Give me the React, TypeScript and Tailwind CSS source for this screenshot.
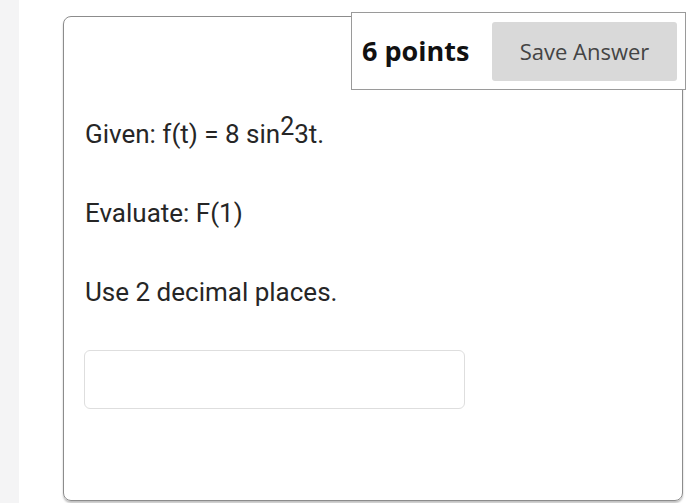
import type { FC } from "react";

const PointsBar: FC = () => (
  <div className="absolute top-[-5px] right-[-4px] flex h-[78px] w-[335px] items-center justify-between border border-[#9a9a9a] bg-white pl-[10px] pr-[8px]">
    <span className="font-['Open_Sans',sans-serif] text-[27px] font-bold text-[#111]">
      6 points
    </span>
    <button className="h-[59px] w-[185px] rounded-[3px] bg-[#d9d9d9] font-['Open_Sans',sans-serif] text-[22px] text-[#444]">
      Save Answer
    </button>
  </div>
);

export default function App() {
  return (
    <div className="flex h-[503px] w-[700px] overflow-hidden bg-white">
      <div className="h-full w-[19px] bg-[#f4f4f5]" />
      <div className="relative ml-[44px] mt-[16px] h-[485px] w-[620px] rounded-lg border border-[#8c8c8c] shadow-[0_2px_2px_rgba(0,0,0,0.25)]">
        <PointsBar />
        <div className="flex flex-col gap-[49px] pl-[21px] pt-[102px] font-['Roboto',sans-serif] text-[26px] leading-[30px] text-[#262626]">
          <p>
            Given: f(t) = 8 sin
            <sup className="relative top-[-8px] align-baseline text-[25px] leading-none">2</sup>
            3t.
          </p>
          <p>Evaluate: F(1)</p>
          <p>Use 2 decimal places.</p>
        </div>
        <input
          type="text"
          className="ml-[20px] mt-[43px] h-[59px] w-[381px] rounded-md border border-[#dedede] bg-white outline-none"
        />
      </div>
    </div>
  );
}
